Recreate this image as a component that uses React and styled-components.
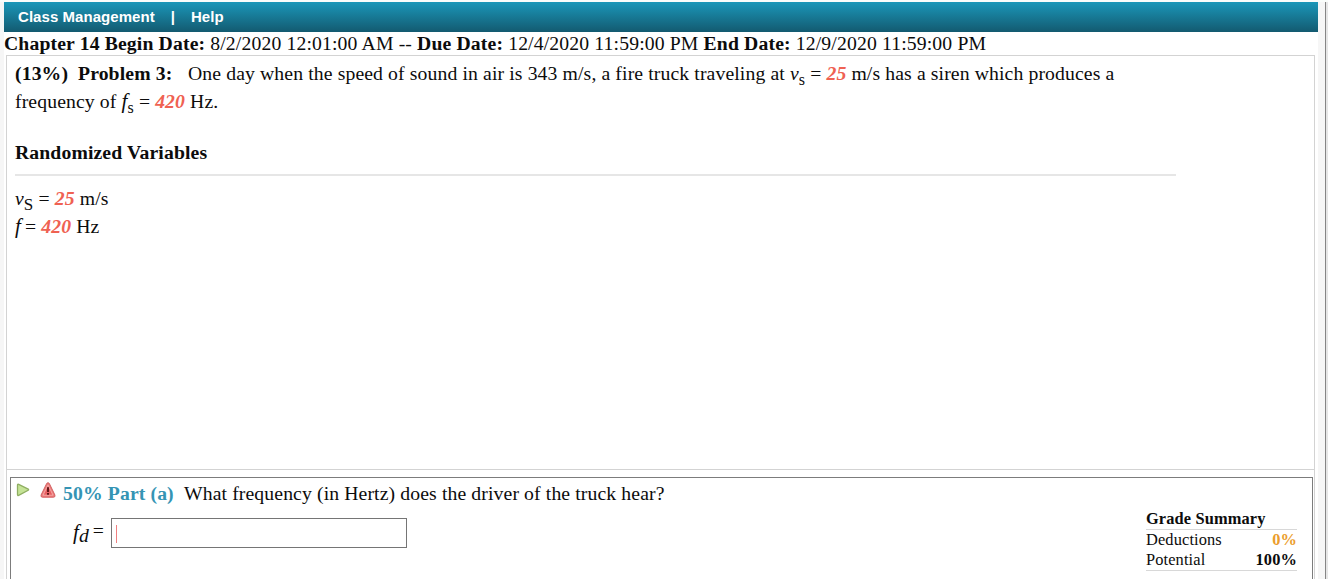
import React, { useState } from "react";
import styled, { createGlobalStyle } from "styled-components";

const App = () => {

    const [answer, setAnswer] = useState("");

    return (
        <>
            <GlobalStyle />
            <Page>
                <Sheet>
                    <Menu>
                        <MenuItem>Class Management</MenuItem>
                        <MenuBar>|</MenuBar>
                        <MenuItem>Help</MenuItem>
                    </Menu>

                    <Dates>
                        <b>Chapter 14 Begin Date:</b> 8/2/2020 12:01:00 AM -- <b>Due Date:</b> 12/4/2020 11:59:00 PM <b>End Date:</b> 12/9/2020 11:59:00 PM
                    </Dates>

                    <Content>
                        <Problem>
                            <Line>
                                <Weight>(13%)</Weight>
                                <Number>Problem 3:</Number>
                                <span>
                                    One day when the speed of sound in air is 343 m/s, a fire truck traveling at <i>v</i><Sub>s</Sub> = <Value>25</Value> m/s has a siren which produces a
                                </span>
                            </Line>
                            <Line>
                                <span>frequency of <Func>f</Func><Sub>s</Sub> = <Value>420</Value> Hz.</span>
                            </Line>

                            <Heading>Randomized Variables</Heading>

                            <Line>
                                <span><i>v</i><Sub $size="17px">S</Sub> = <Value>25</Value> m/s</span>
                            </Line>
                            <Line>
                                <span><Func $pull="-1px">f</Func> = <Value>420</Value> Hz</span>
                            </Line>
                        </Problem>

                        <Part>
                            <Question>
                                <PartTitle>
                                    <PlayIcon />
                                    <WarningIcon />
                                    <PartName>50% Part (a)</PartName>
                                    <span>What frequency (in Hertz) does the driver of the truck hear?</span>
                                </PartTitle>
                                <AnswerBind>
                                    <AnswerLabel>
                                        <span><Low $top="2px" $size="21px">f</Low><Low $top="5px">d</Low></span>
                                        <span>=</span>
                                    </AnswerLabel>
                                    <AnswerBox>
                                        <Caret />
                                        <AnswerInput value={answer} onChange={(e) => setAnswer(e.target.value)} />
                                    </AnswerBox>
                                </AnswerBind>
                            </Question>

                            <Summary>
                                <SummaryTitle>Grade Summary</SummaryTitle>
                                <SummaryRow>
                                    <span>Deductions</span>
                                    <Percent $color="#eb9d2c">0%</Percent>
                                </SummaryRow>
                                <SummaryRow>
                                    <span>Potential</span>
                                    <Percent>100%</Percent>
                                </SummaryRow>
                            </Summary>
                        </Part>
                    </Content>
                </Sheet>
                <Edge />
            </Page>
        </>
    );
}

export default App;

const PlayIcon = () => (
    <PlaySvg width="14" height="14" viewBox="0 0 14 14">
        <path d="M1.5 2.2 Q1.5 0.9 2.7 1.4 L12.2 6.1 Q13 6.7 12.2 7.3 L2.7 12.4 Q1.5 12.8 1.5 11.6 Z" fill="#c5e396" stroke="#8fae62" strokeWidth="1.3" />
    </PlaySvg>
);

const WarningIcon = () => (
    <WarningSvg width="16" height="16" viewBox="0 0 16 16">
        <path d="M8 0.7 Q9 0.7 9.5 1.9 L14.9 13 Q15.5 15.2 13.6 15.2 L2.4 15.2 Q0.5 15.2 1.1 13 L6.5 1.9 Q7 0.7 8 0.7 Z" fill="#ec7c7c" stroke="#d25f60" />
        <path d="M8 3 L13 13.2 L3 13.2 Z" fill="#e85f62" stroke="#f6b5b1" strokeWidth="0.8" />
        <path d="M8 5.2 V10" stroke="#5c1414" strokeWidth="1.9" />
        <path d="M8 11 V12.8" stroke="#5c1414" strokeWidth="1.9" />
    </WarningSvg>
);

const GlobalStyle = createGlobalStyle`
    * {
        box-sizing: border-box;
    }

    body {
        margin: 0;
        overflow: hidden;
        background-color: #f6f6f6;
        color: #0c0c0c;
        font-family: "Liberation Serif", "Times New Roman", serif;
        font-size: 19.7px;
        letter-spacing: 0.12px;
    }
`

const Page = styled.div`
    height: 579px;
    display: flex;
    padding-left: 4px;
    border-top: 2px solid #fafdfb;
`

const Sheet = styled.div`
    width: 1314px;
    background-color: #fff;
    display: flex;
    flex-direction: column;
`

const Edge = styled.div`
    width: 3px;
    margin-left: auto;
    border-left: 1px solid #858585;
    background-color: #e6e6e6;
`

const Menu = styled.div`
    height: 30px;
    padding: 0 14px 1px;
    display: flex;
    align-items: center;
    background: linear-gradient(#1b97b9, #135a70);
    color: #fff;
    font: bold 15px "Liberation Sans", Arial, sans-serif;
    letter-spacing: 0.05px;
`

const MenuItem = styled.span`
    cursor: pointer;
`

const MenuBar = styled.span`
    margin: 0 16px;
`

const Dates = styled.div`
    height: 23px;
    line-height: 23px;
    letter-spacing: 0.14px;
    white-space: nowrap;
`

const Content = styled.div`
    flex: 1;
    margin: 0 3px 0 2px;
    border: 1px solid #d3d3d3;
    border-bottom: 0;
    display: flex;
    flex-direction: column;
`

const Problem = styled.div`
    height: 414px;
    padding: 3px 0 0 8px;
    border-bottom: 1px solid #d3d3d3;
`

const Line = styled.div`
    height: 28px;
    line-height: 28px;
    display: flex;
    white-space: nowrap;
`

const Weight = styled.b`
    width: 63px;
`

const Number = styled.b`
    width: 110px;
`

const Func = styled.i`
    margin-right: ${({ $pull }) => $pull || "0"};
    font-size: 21px;
    line-height: 0;
`

const Sub = styled.sub`
    font-size: ${({ $size }) => $size || "16px"};
    line-height: 0;
`

const Value = styled.span`
    color: #ef6152;
    font-weight: bold;
    font-style: italic;
`

const Heading = styled.div`
    width: 1161px;
    height: 38px;
    margin: 23px 0 8px;
    line-height: 28px;
    border-bottom: 2px solid #e6e6e6;
    font-weight: bold;
`

const Part = styled.div`
    flex: 1;
    margin: 7px 1px 0 3px;
    border: 1px solid #7c7c7c;
    border-bottom: 0;
    display: flex;
    justify-content: space-between;
`

const Question = styled.div`
    padding-top: 1px;
`

const PartTitle = styled.div`
    height: 28px;
    padding-left: 5px;
    line-height: 28px;
    display: flex;
    white-space: nowrap;
`

const PlaySvg = styled.svg`
    margin-top: 4px;
`

const WarningSvg = styled.svg`
    margin: 3px 7px 0 10px;
`

const PartName = styled.b`
    width: 121px;
    color: #3594b4;
`

const AnswerBind = styled.div`
    margin: 11px 0 0 62px;
    display: flex;
`

const AnswerLabel = styled.div`
    width: 38px;
    padding-right: 7px;
    line-height: 24px;
    display: flex;
    justify-content: space-between;
    white-space: nowrap;
`

const Low = styled.i`
    position: relative;
    top: ${({ $top }) => $top};
    font-size: ${({ $size }) => $size || "19.7px"};
    line-height: 0;
`

const AnswerBox = styled.label`
    width: 296px;
    height: 30px;
    padding: 6px 4px;
    border: 1px solid #757575;
    display: flex;
`

const Caret = styled.div`
    width: 1px;
    height: 18px;
    background-color: #f08080;
`

const AnswerInput = styled.input`
    flex: 1;
    min-width: 0;
    padding: 0;
    border: 0;
    outline: 0;
    background: none;
    font: inherit;
`

const Summary = styled.div`
    width: 151px;
    height: 63px;
    margin: 30px 15px 0 0;
    border-bottom: 1px solid #d8d8d8;
    font-size: 16.4px;
`

const SummaryTitle = styled.div`
    height: 22px;
    line-height: 22px;
    border-bottom: 1px solid #d8d8d8;
    font-weight: bold;
`

const SummaryRow = styled.div`
    height: 20px;
    line-height: 20px;
    display: flex;
    justify-content: space-between;
`

const Percent = styled.b`
    color: ${({ $color }) => $color || "#0c0c0c"};
`
